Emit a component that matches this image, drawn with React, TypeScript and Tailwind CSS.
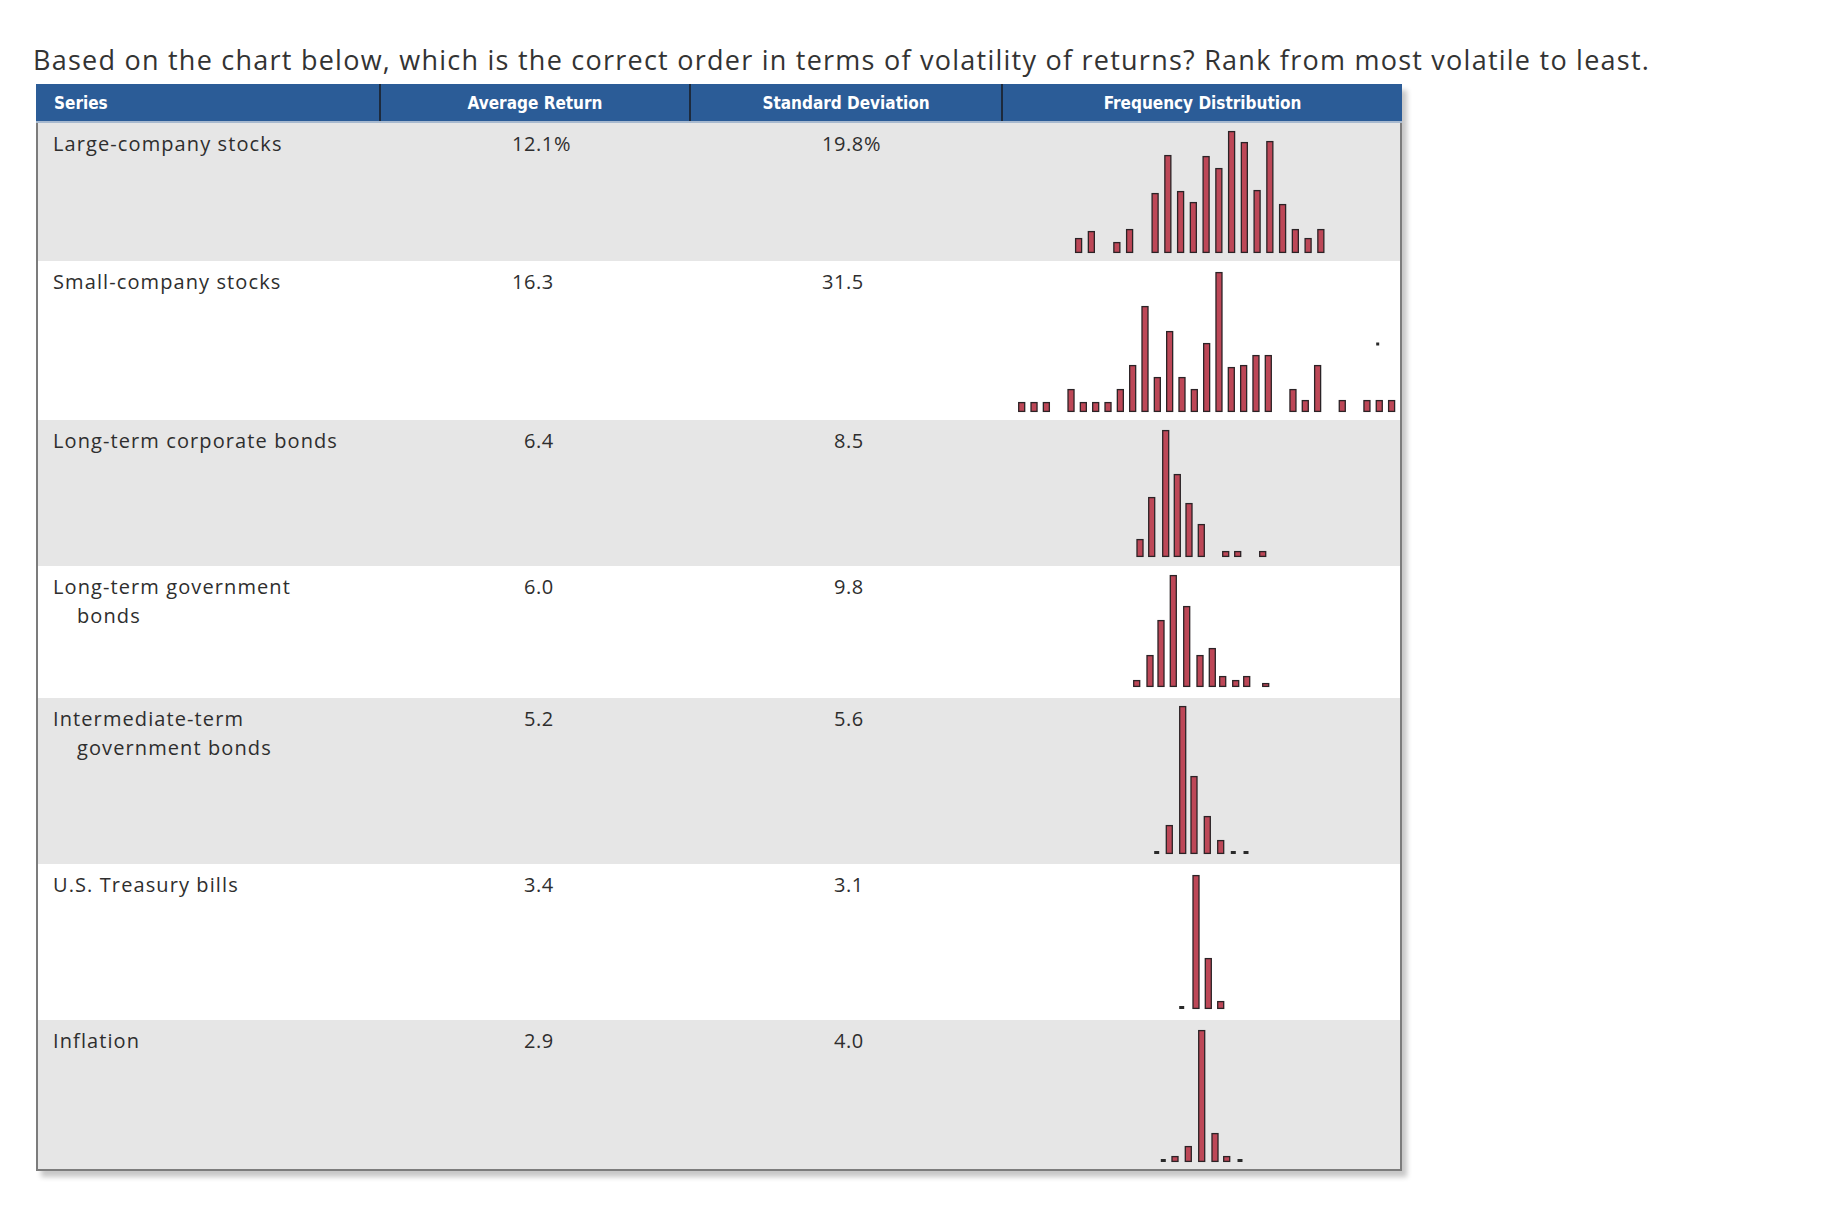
type Bar = [number, number];

interface Row {
  name: string[];
  avg: [string, string];
  sd: [string, string];
  height: number;
  base: number;
  gray: boolean;
  bars: Bar[];
  dots?: [number, number][];
}

const COL4_LEFT = 1001;

const grid = (start: number, step: number, slots: number[], heights: number[]): Bar[] =>
  slots.map((s, i) => [start + step * s, heights[i]]);

const rows: Row[] = [
  {
    name: ["Large-company stocks"],
    avg: ["12", ".1%"],
    sd: ["19", ".8%"],
    height: 138,
    base: 130,
    gray: true,
    bars: grid(
      1078.6,
      12.75,
      [0, 1, 3, 4, 6, 7, 8, 9, 10, 11, 12, 13, 14, 15, 16, 17, 18, 19],
      [15, 22, 11, 24, 60, 98, 62, 51, 97, 85, 122, 111, 63, 112, 49, 24, 15, 24]
    ),
  },
  {
    name: ["Small-company stocks"],
    avg: ["16", ".3"],
    sd: ["31", ".5"],
    height: 159,
    base: 151,
    gray: false,
    bars: grid(
      1021.7,
      12.33,
      [0, 1, 2, 4, 5, 6, 7, 8, 9, 10, 11, 12, 13, 14, 15, 16, 17, 18, 19, 20, 22, 23, 24, 26, 28, 29, 30],
      [10, 10, 10, 23, 10, 10, 10, 23, 47, 106, 35, 81, 35, 23, 69, 140, 45, 47, 57, 57, 23, 12, 47, 12, 12, 12, 12]
    ),
    dots: [[1377.7, 83]],
  },
  {
    name: ["Long-term corporate bonds"],
    avg: ["6", ".4"],
    sd: ["8", ".5"],
    height: 146,
    base: 137,
    gray: true,
    bars: [
      [1140, 18], [1151.7, 60], [1165.7, 127], [1177.3, 83], [1189, 54],
      [1201.3, 33], [1225.7, 6], [1237.7, 6], [1262.7, 6],
    ],
  },
  {
    name: ["Long-term government", "bonds"],
    avg: ["6", ".0"],
    sd: ["9", ".8"],
    height: 132,
    base: 121,
    gray: false,
    bars: [
      [1136.7, 7], [1150, 32], [1161, 67], [1173.3, 112], [1186.7, 81], [1200, 32],
      [1212.3, 39], [1222.7, 11], [1235.7, 7], [1246.7, 11], [1265.7, 4],
    ],
  },
  {
    name: ["Intermediate-term", "government bonds"],
    avg: ["5", ".2"],
    sd: ["5", ".6"],
    height: 166,
    base: 156,
    gray: true,
    bars: [
      [1156.7, 2], [1169.3, 29], [1182.7, 148], [1194, 78], [1207.3, 38],
      [1220.7, 14], [1233.3, 2], [1246, 2],
    ],
  },
  {
    name: ["U.S. Treasury bills"],
    avg: ["3", ".4"],
    sd: ["3", ".1"],
    height: 156,
    base: 145,
    gray: false,
    bars: [[1181.7, 2], [1196, 134], [1208.3, 51], [1220.7, 8]],
  },
  {
    name: ["Inflation"],
    avg: ["2", ".9"],
    sd: ["4", ".0"],
    height: 149,
    base: 142,
    gray: true,
    bars: [
      [1163.3, 2], [1175, 6], [1188.3, 16], [1201.7, 132], [1215, 29], [1226.7, 6], [1240, 2],
    ],
  },
];

function Histogram({ row }: { row: Row }) {
  return (
    <svg width={399} height={row.height} className="block">
      {row.bars.map(([cx, h], i) => {
        const x = cx - COL4_LEFT;
        if (h <= 3) {
          return <rect key={i} x={x - 2.5} y={row.base - 3} width={5} height={3} fill="#2a2a2a" />;
        }
        return (
          <rect
            key={i}
            x={x - 3}
            y={row.base - h + 0.6}
            width={6}
            height={h - 1.2}
            fill="#bd4757"
            stroke="#2b2326"
            strokeWidth={1.3}
          />
        );
      })}
      {row.dots?.map(([cx, cy], i) => (
        <rect key={"d" + i} x={cx - COL4_LEFT - 1.5} y={cy - 1.5} width={3} height={3} fill="#2a2a2a" />
      ))}
    </svg>
  );
}

function Num({ v }: { v: [string, string] }) {
  return (
    <div className="flex pt-[6px] leading-[29px] tracking-[0.03em]">
      <span className="w-[157px] text-right">{v[0]}</span>
      <span>{v[1]}</span>
    </div>
  );
}

export default function App() {
  return (
    <div className="min-h-[1210px] bg-white">
      <p className="pl-[33px] pt-[42px] font-['Open_Sans',sans-serif] text-[27px] leading-[35px] tracking-[0.046em] text-[#333333]">
        Based on the chart below, which is the correct order in terms of volatility of returns? Rank from most volatile to least.
      </p>

      <div className="ml-[36px] mt-[7px] w-[1366px] shadow-[5px_6px_5px_rgba(0,0,0,0.22)]">
        {/* header */}
        <div className="grid h-[39px] grid-cols-[343px_310px_312px_401px] border-b-2 border-[#a7b9cf] bg-[#2b5c97] font-['DejaVu_Sans_Condensed','Liberation_Sans_Narrow',sans-serif] text-[17px] font-bold text-white">
          <div className="flex items-center pl-[18px] pt-[3px]">Series</div>
          <div className="flex items-center justify-center border-l-2 border-[#1d2a3c] pt-[3px]">Average Return</div>
          <div className="flex items-center justify-center border-l-2 border-[#1d2a3c] pt-[3px]">Standard Deviation</div>
          <div className="flex items-center justify-center border-l-2 border-[#1d2a3c] pt-[3px]">Frequency Distribution</div>
        </div>

        {/* body */}
        <div className="border-x-2 border-b-2 border-[#7c7c7c] font-['Open_Sans',sans-serif] text-[20px] text-[#2e2e2e]">
          {rows.map((row, i) => (
            <div
              key={i}
              className={`grid grid-cols-[341px_310px_312px_399px] ${row.gray ? "bg-[#e6e6e6]" : "bg-white"}`}
              style={{ height: row.height }}
            >
              <div className="pl-[39px] pt-[6px] -indent-6 leading-[29px] tracking-[0.055em]">
                {row.name.map((line, j) => (
                  <span key={j}>
                    {j > 0 && <br />}
                    {line}
                  </span>
                ))}
              </div>
              <Num v={row.avg} />
              <Num v={row.sd} />
              <Histogram row={row} />
            </div>
          ))}
        </div>
      </div>
    </div>
  );
}
